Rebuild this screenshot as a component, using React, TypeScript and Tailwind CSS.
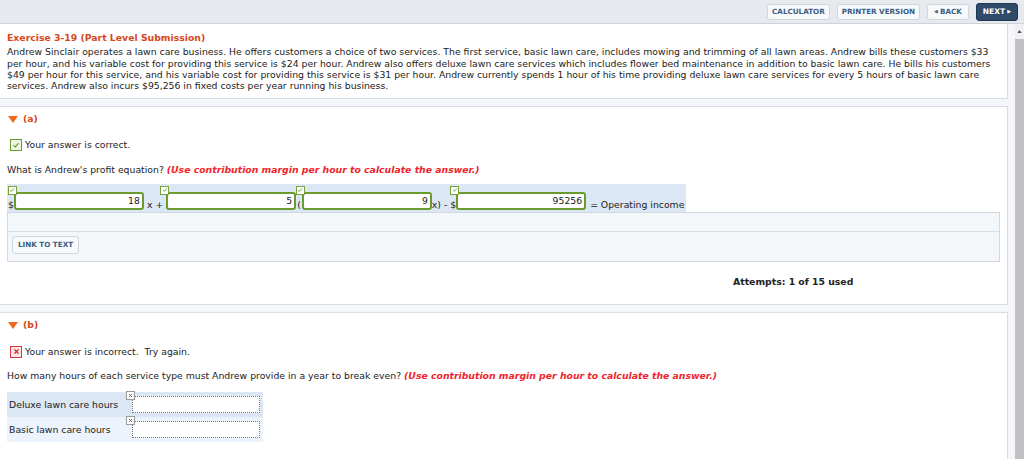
function Check() {
  return (
    <span className="inline-flex h-[9px] w-[9px] items-center justify-center border border-[#7aa23a] bg-white">
      <svg viewBox="0 0 8 8" className="h-[6px] w-[6px]">
        <path d="M1.5 4.2 L3.2 5.8 L6.5 2" fill="none" stroke="#5c9a1e" strokeWidth="1.2" />
      </svg>
    </span>
  );
}

function SmallX() {
  return (
    <span className="inline-flex h-[9px] w-[9px] items-center justify-center border border-[#9a9a9a] bg-white">
      <svg viewBox="0 0 8 8" className="h-[5px] w-[5px]">
        <path d="M1.5 1.5 L6.5 6.5 M6.5 1.5 L1.5 6.5" stroke="#555" strokeWidth="1.3" />
      </svg>
    </span>
  );
}

function Triangle() {
  return (
    <svg viewBox="0 0 10 7" className="h-[7px] w-[10px]">
      <path d="M0 0 H10 L5 7 Z" fill="#ef6a1e" />
    </svg>
  );
}

function GreenInput({ value }: { value: string }) {
  return (
    <div className="relative">
      <div className="absolute -top-[8px] -left-[6px]">
        <Check />
      </div>
      <div className="flex h-[18px] w-[130px] items-center justify-end rounded-[3px] border-2 border-[#6b9a2e] bg-white pr-[2px] text-[#222]">
        {value}
      </div>
    </div>
  );
}

function HourRow({ label, bg }: { label: string; bg: string }) {
  return (
    <div className={`flex h-[25px] w-[256px] items-center ${bg}`}>
      <span className="w-[125px] pl-[2px]">{label}</span>
      <div className="relative">
        <div className="absolute -top-[7px] -left-[6px]">
          <SmallX />
        </div>
        <div className="h-[17px] w-[128px] border border-dotted border-[#777] bg-white" />
      </div>
    </div>
  );
}

const headBtn =
  "flex h-[16px] items-center rounded-[3px] border border-[#cfd6de] bg-[#f7f9fb] px-[4px] text-[7.2px] font-bold text-[#3b5d86]";

export default function App() {
  return (
    <div className="h-[459px] w-[1024px] overflow-hidden bg-[#f4f6f9] text-[9.3px] leading-[11.3px] text-[#222] font-['DejaVu_Sans',Verdana,sans-serif]">
      <div className="flex h-[24px] items-center justify-end gap-[7px] border-b border-[#cdd4dc] bg-[#e6eaee] pr-[6px]">
        <div className={headBtn}>CALCULATOR</div>
        <div className={headBtn}>PRINTER VERSION</div>
        <div className={`${headBtn} px-[6px]`}>
          <span className="mr-[2px] text-[5px]">◀</span>BACK
        </div>
        <div className="flex h-[18px] items-center rounded-[3px] border border-[#1f3550] bg-[#2f4a6b] px-[6px] text-[7.5px] font-bold text-white">
          NEXT<span className="ml-[2px] text-[5px]">▶</span>
        </div>
      </div>

      <div className="flex h-[435px]">
        <div className="flex w-[1008px] flex-col gap-[7px]">
          <div className="border-r border-b border-[#d7dee6] bg-white px-[7px] pt-[8px] pb-[7px]">
            <div className="mb-[3px] font-bold text-[#d9461a]">Exercise 3-19 (Part Level Submission)</div>
            <p className="whitespace-nowrap">
              Andrew Sinclair operates a lawn care business. He offers customers a choice of two services. The first
              service, basic lawn care, includes mowing and trimming of all lawn areas. Andrew bills these customers $33
              <br />
              per hour, and his variable cost for providing this service is $24 per hour. Andrew also offers deluxe lawn
              care services which includes flower bed maintenance in addition to basic lawn care. He bills his customers
              <br />
              $49 per hour for this service, and his variable cost for providing this service is $31 per hour. Andrew
              currently spends 1 hour of his time providing deluxe lawn care services for every 5 hours of basic lawn care
              <br />
              services. Andrew also incurs $95,256 in fixed costs per year running his business.
            </p>
          </div>

          <div className="border-y border-r border-[#d7dee6] bg-white pt-[6px] pb-[17px]">
            <div className="flex items-center gap-[5px] pl-[8px] font-bold text-[#d9461a]">
              <Triangle />
              (a)
            </div>
            <div className="mt-[14px] flex items-center gap-[3px] pl-[10px]">
              <span className="inline-flex h-[12px] w-[12px] items-center justify-center border border-[#6b9a2e] bg-[#eef5e4]">
                <svg viewBox="0 0 10 10" className="h-[8px] w-[8px]">
                  <path d="M2 5.2 L4.2 7.3 L8.2 2.8" fill="none" stroke="#5c9a1e" strokeWidth="1.4" />
                </svg>
              </span>
              Your answer is correct.
            </div>
            <div className="mt-[13px] pl-[7px]">
              What is Andrew's profit equation?{" "}
              <span className="font-bold italic text-[#f0242b]">(Use contribution margin per hour to calculate the answer.)</span>
            </div>
            <div className="mt-[9px] ml-[7px] flex h-[28px] w-[679px] items-end bg-[#dce7f5] pb-[2px]">
              <span className="ml-[1px]">$</span>
              <GreenInput value="18" />
              <span className="mx-[3px]">x +</span>
              <GreenInput value="5" />
              <span className="mx-[1px]">(</span>
              <GreenInput value="9" />
              <span>x) - $</span>
              <GreenInput value="95256" />
              <span className="ml-[4px]">= Operating income</span>
            </div>
            <div className="mx-[7px] flex flex-col border border-[#d2d9e1] bg-[#f4f7fa]">
              <div className="h-[19px] border-b border-[#d7dee6]" />
              <div className="px-[4px] pt-[4px] pb-[7px]">
                <div className="inline-flex h-[18px] items-center rounded-[3px] border border-[#cfd6de] bg-[#f7f9fb] px-[5px] text-[7.2px] font-bold text-[#3b5d86]">
                  LINK TO TEXT
                </div>
              </div>
            </div>
            <div className="mt-[14px] pl-[733px] font-bold">Attempts: 1 of 15 used</div>
          </div>

          <div className="flex-1 border-t border-r border-[#d7dee6] bg-white pt-[6px]">
            <div className="flex items-center gap-[5px] pl-[8px] font-bold text-[#d9461a]">
              <Triangle />
              (b)
            </div>
            <div className="mt-[15px] flex items-center gap-[3px] pl-[10px]">
              <span className="inline-flex h-[12px] w-[12px] items-center justify-center border border-[#e2363a] bg-[#fde9e9]">
                <svg viewBox="0 0 10 10" className="h-[7px] w-[7px]">
                  <path d="M2 2 L8 8 M8 2 L2 8" stroke="#d2161c" strokeWidth="1.8" />
                </svg>
              </span>
              Your answer is incorrect.&nbsp; Try again.
            </div>
            <div className="mt-[12px] pl-[7px]">
              How many hours of each service type must Andrew provide in a year to break even?{" "}
              <span className="font-bold italic text-[#f0242b]">(Use contribution margin per hour to calculate the answer.)</span>
            </div>
            <div className="mt-[11px] ml-[7px] flex flex-col">
              <HourRow label="Deluxe lawn care hours" bg="bg-[#dce7f5]" />
              <HourRow label="Basic lawn care hours" bg="bg-[#edf3fc]" />
            </div>
          </div>
        </div>

        <div className="ml-[7px] flex w-[9px] flex-col bg-[#c1c1c1]">
          <div className="flex h-[15px] items-center justify-center bg-[#f1f1f1]">
            <svg viewBox="0 0 6 4" className="h-[3px] w-[5px]">
              <path d="M0 4 L3 0 L6 4 Z" fill="#555" />
            </svg>
          </div>
        </div>
      </div>
    </div>
  );
}
